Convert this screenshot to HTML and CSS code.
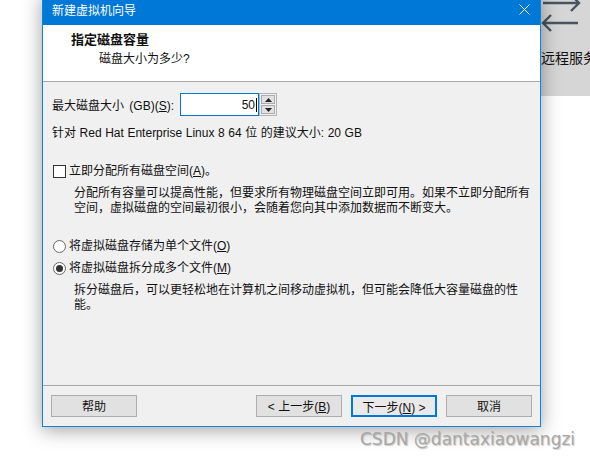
FILE: index.html
```html
<!DOCTYPE html>
<html lang="zh-CN">
<head>
  <meta charset="UTF-8">
  <title>新建虚拟机向导</title>
  <link rel="stylesheet" href="styles.css">
</head>
<body>

<!-- 后面的窗口 -->
<div class="back-panel">
  <svg class="swap-icon" width="49" height="40" viewBox="0 0 49 40">
    <path d="M2 3H38M30 -5L38 3L30 11" />
    <path d="M37 23H2M10 15L2 23L10 31" />
  </svg>
  <span class="back-label">远程服务</span>
</div>

<div class="window">
  <div class="titlebar">
    <span class="title-text">新建虚拟机向导</span>
    <svg class="close" width="11" height="11" viewBox="0 0 11 11">
      <path d="M0.5 0.5L10.5 10.5M10.5 0.5L0.5 10.5" />
    </svg>
  </div>

  <div class="banner">
    <div class="banner-title">指定磁盘容量</div>
    <div class="banner-sub">磁盘大小为多少?</div>
  </div>

  <div class="content">
    <div class="size-row">
      <label class="size-label">最大磁盘大小 (GB)(<u>S</u>):</label>
      <div class="size-input"><span class="size-value">50</span></div>
      <div class="spinner">
        <div class="spin-btn"><svg width="7" height="4" viewBox="0 0 7 4"><path d="M3.5 0L7 4H0Z" /></svg></div>
        <div class="spin-btn"><svg width="7" height="4" viewBox="0 0 7 4"><path d="M0 0H7L3.5 4Z" /></svg></div>
      </div>
    </div>
    <p class="hint">针对 Red Hat Enterprise Linux 8 64 位 的建议大小: 20 GB</p>

    <div class="option alloc">
      <span class="checkbox"></span>
      <span>立即分配所有磁盘空间(<u>A</u>)。</span>
    </div>
    <p class="desc">分配所有容量可以提高性能，但要求所有物理磁盘空间立即可用。如果不立即分配所有空间，虚拟磁盘的空间最初很小，会随着您向其中添加数据而不断变大。</p>

    <div class="option single">
      <span class="radio"></span>
      <span>将虚拟磁盘存储为单个文件(<u>O</u>)</span>
    </div>
    <div class="option multi">
      <span class="radio checked"></span>
      <span>将虚拟磁盘拆分成多个文件(<u>M</u>)</span>
    </div>
    <p class="desc">拆分磁盘后，可以更轻松地在计算机之间移动虚拟机，但可能会降低大容量磁盘的性能。</p>
  </div>

  <div class="footer">
    <button class="btn">帮助</button>
    <div class="nav-buttons">
      <button class="btn">&lt; 上一步(<u>B</u>)</button>
      <button class="btn primary">下一步(<u>N</u>) &gt;</button>
      <button class="btn">取消</button>
    </div>
  </div>
</div>

<div class="watermark">CSDN @dantaxiaowangzi</div>

</body>
</html>
```

FILE: styles.css
```css
html, body {
  margin: 0;
  height: 100%;
}

body {
  position: relative;
  width: 590px;
  height: 458px;
  overflow: hidden;
  background: #fff;
  font-family: "Liberation Sans", "Noto Sans CJK SC", sans-serif;
  font-size: 12px;
  color: #111;
}

.back-panel {
  position: absolute;
  left: 520px;
  top: 0;
  width: 70px;
  height: 96px;
  background: #d6d6d6;
  overflow: hidden;
}

.swap-icon {
  position: absolute;
  left: 21px;
  top: 0;
}

.swap-icon path {
  fill: none;
  stroke: #47555f;
  stroke-width: 2.4;
}

.back-label {
  position: absolute;
  left: 21px;
  top: 47px;
  font-size: 14px;
  line-height: 22px;
  white-space: nowrap;
}

.window {
  position: absolute;
  left: 42px;
  top: -6px;
  width: 499px;
  height: 433px;
  box-sizing: border-box;
  display: flex;
  flex-direction: column;
  background: #f0f0f0;
  border: 1px solid #0b84e0;
  box-shadow: 0 3px 18px rgba(0, 0, 0, 0.38);
}

.titlebar {
  height: 30px;
  flex: none;
  box-sizing: border-box;
  display: flex;
  justify-content: space-between;
  align-items: center;
  padding: 0 10px 0 9px;
  background: #0078d7;
  color: #fff;
  line-height: 18px;
}

.title-text {
  margin-top: 2px;
}

.close {
  margin-bottom: 2px;
}

.close path {
  fill: none;
  stroke: #fff;
  stroke-width: 1;
}

.banner {
  height: 57px;
  flex: none;
  box-sizing: border-box;
  padding: 7px 0 0 28px;
  background: #fff;
  border-bottom: 1px solid #a8a8a8;
  line-height: 16px;
}

.banner-title {
  font-size: 13px;
  font-weight: 700;
}

.banner-sub {
  margin: 3px 0 0 28px;
}

.content {
  flex: 1;
  padding: 11px 0 0 9px;
  border-bottom: 1px solid #a8a8a8;
}

.size-row {
  display: flex;
  align-items: center;
  height: 23px;
}

.size-label {
  width: 128px;
  flex: none;
  white-space: nowrap;
  word-spacing: 2px;
}

.size-input {
  box-sizing: border-box;
  width: 79px;
  height: 23px;
  border: 1px solid #0078d7;
  background: #fff;
  text-align: right;
  padding-right: 1px;
  line-height: 20px;
}

.size-value {
  display: inline-block;
  border-right: 1px solid #000;
  line-height: 14px;
  vertical-align: middle;
  padding-right: 1px;
}

.spinner {
  box-sizing: border-box;
  width: 18px;
  height: 23px;
  border: 1px solid #b4b4b4;
  padding: 1px;
  display: flex;
  flex-direction: column;
  gap: 1px;
  background: #f0f0f0;
}

.spin-btn {
  flex: 1;
  display: flex;
  align-items: center;
  justify-content: center;
  background: #e1e1e1;
  border: 1px solid #adadad;
}

.spin-btn path {
  fill: #222;
}

.hint {
  margin: 9px 0 0;
  line-height: 16px;
  white-space: nowrap;
  word-spacing: 0.25px;
}

.option {
  display: flex;
  align-items: center;
  height: 16px;
  line-height: 16px;
}

.alloc {
  margin: 22px 0 0 1px;
}

.single {
  margin-top: 22px;
  margin-left: 1px;
}

.multi {
  margin-top: 6px;
  margin-left: 1px;
}

.checkbox {
  width: 11px;
  height: 11px;
  flex: none;
  margin-right: 3px;
  border: 1px solid #333;
  background: #fff;
}

.radio {
  box-sizing: border-box;
  width: 13px;
  height: 13px;
  flex: none;
  margin-right: 3px;
  border: 1px solid #666;
  border-radius: 50%;
  background: #fff;
  display: flex;
  align-items: center;
  justify-content: center;
}

.radio.checked::after {
  content: "";
  width: 7px;
  height: 7px;
  border-radius: 50%;
  background: #333;
}

.desc {
  margin: 7px 8px 0 22px;
  line-height: 15px;
}

.footer {
  height: 40px;
  flex: none;
  box-sizing: border-box;
  display: flex;
  justify-content: space-between;
  padding: 9px 8px 0 8px;
}

.nav-buttons {
  display: flex;
  gap: 9px;
}

.btn {
  box-sizing: border-box;
  width: 86px;
  height: 22px;
  padding: 2px 0 0;
  border: 1px solid #adadad;
  background: #e1e1e1;
  font: inherit;
  line-height: 18px;
  color: #111;
}

.btn.primary {
  border: 2px solid #0078d7;
  background: #e9e9e9;
}

.watermark {
  position: absolute;
  left: 360px;
  top: 429px;
  font-family: "DejaVu Sans", sans-serif;
  font-size: 17px;
  line-height: 20px;
  color: #a8a8a8;
  white-space: nowrap;
  text-shadow: 1px 1px 1px rgba(0, 0, 0, 0.2);
}
```
